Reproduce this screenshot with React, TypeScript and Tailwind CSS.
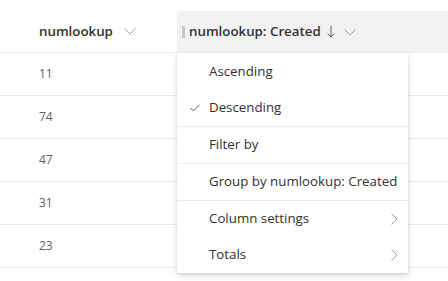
import React from 'react';

const rows = ['11', '74', '47', '31', '23'];

function ChevronDown({ className = '' }: { className?: string }) {
  return (
    <svg className={className} width="12" height="7" viewBox="0 0 12 7" fill="none">
      <path d="M0.5 0.5L6 6L11.5 0.5" stroke="currentColor" strokeWidth="1" />
    </svg>
  );
}

function ChevronRight() {
  return (
    <svg width="7" height="12" viewBox="0 0 7 12" fill="none" className="text-[#a19f9d]">
      <path d="M0.5 0.5L6 6L0.5 11.5" stroke="currentColor" strokeWidth="1" />
    </svg>
  );
}

function Check() {
  return (
    <svg width="10" height="8" viewBox="0 0 10 8" fill="none" className="text-[#605e5c]">
      <path d="M0.5 4L3.5 7L9.5 0.8" stroke="currentColor" strokeWidth="1" />
    </svg>
  );
}

function ArrowDown() {
  return (
    <svg width="8" height="12" viewBox="0 0 8 12" fill="none" className="text-[#605e5c]">
      <path d="M4 0V11M0.6 7.6L4 11L7.4 7.6" stroke="currentColor" strokeWidth="1" />
    </svg>
  );
}

function MenuItem({
  label,
  checked = false,
  submenu = false,
  divider = false,
}: {
  label: string;
  checked?: boolean;
  submenu?: boolean;
  divider?: boolean;
}) {
  return (
    <div className={`flex items-center ${divider ? 'h-[37px] border-b border-[#edebe9]' : 'h-[36px]'}`}>
      <div className="flex w-[32px] justify-end pr-[9px]">{checked && <Check />}</div>
      <span className="flex-1 text-[13.3px] text-[#323130]">{label}</span>
      {submenu && (
        <div className="pr-[10px]">
          <ChevronRight />
        </div>
      )}
    </div>
  );
}

export default function App() {
  return (
    <div
      className="relative h-[281px] w-[448px] overflow-hidden bg-white"
      style={{ fontFamily: '"Open Sans", "Noto Sans", sans-serif' }}
    >
      {/* Header */}
      <div className="flex h-[53px] pt-[11px]">
        <div className="flex w-[177px] items-center gap-[11px] border-b border-[#edebe9] pl-[39px]">
          <span className="text-[13.3px] font-semibold text-[#323130]">numlookup</span>
          <ChevronDown className="text-[#a19f9d]" />
        </div>
        <div className="flex flex-1 items-center bg-[#f3f2f1] pl-[5px]">
          <div className="mr-[4px] h-[12px] w-[3px] bg-[#c8c6c4]" />
          <span className="text-[13.3px] font-semibold text-[#323130]">numlookup: Created</span>
          <span className="ml-[6px]">
            <ArrowDown />
          </span>
          <ChevronDown className="ml-[9px] text-[#a19f9d]" />
        </div>
      </div>

      {/* Rows */}
      {rows.map((n) => (
        <div key={n} className="flex h-[43px] items-center border-b border-[#edebe9] pl-[39px]">
          <span className="text-[12px] text-[#605e5c]">{n}</span>
        </div>
      ))}

      {/* Column menu */}
      <div className="absolute left-[177px] top-[53px] w-[231px] bg-white pt-px shadow-[0_3.2px_7.2px_rgba(0,0,0,0.132),0_0.6px_1.8px_rgba(0,0,0,0.108)]">
        <MenuItem label="Ascending" />
        <MenuItem label="Descending" checked divider />
        <MenuItem label="Filter by" divider />
        <MenuItem label="Group by numlookup: Created" divider />
        <MenuItem label="Column settings" submenu />
        <MenuItem label="Totals" submenu />
      </div>
    </div>
  );
}
